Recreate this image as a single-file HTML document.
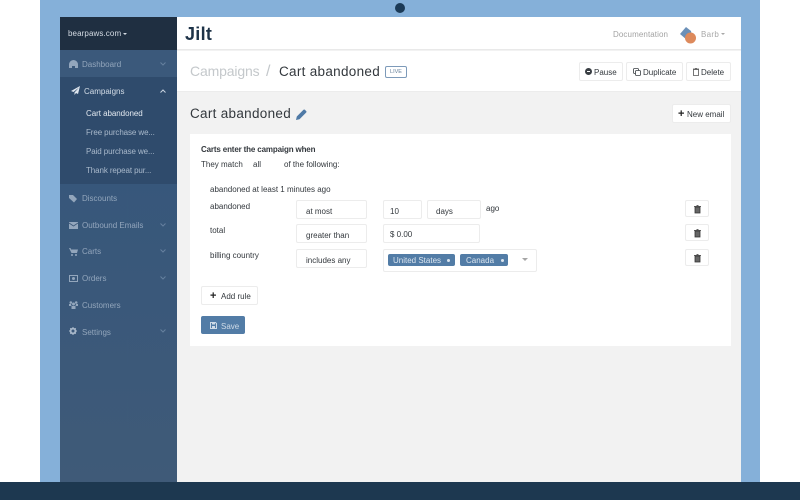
<!DOCTYPE html>
<html><head><meta charset="utf-8"><style>
*{box-sizing:border-box;margin:0;padding:0}
html,body{width:800px;height:500px;overflow:hidden;background:#fff}
body{position:relative;font-family:"Liberation Sans",sans-serif;color:#33383d;filter:blur(.35px)}
.a{position:absolute}
.t{position:absolute;white-space:nowrap;line-height:14px;font-size:8px;letter-spacing:0}
.n{color:#93a6bc;font-size:8px;letter-spacing:0}
.s{color:#a9b9cb;font-size:8px;letter-spacing:-.1px}
.b{position:absolute;background:#fff;border:1px solid #ececec;border-radius:2px}
.btn{position:absolute;background:#fff;border:1px solid #ececec;border-radius:2px;font-size:8px;line-height:17px;white-space:nowrap}
svg{position:absolute;overflow:visible}
</style></head><body>
<div class="a" style="left:40px;top:0;width:720px;height:482px;background:#85b0d9"></div>
<div class="a" style="left:395px;top:3px;width:10px;height:10px;border-radius:50%;background:#1b3a57"></div>
<div class="a" style="left:60px;top:17px;width:681px;height:465px;background:#f2f2f2"></div>

<!-- sidebar -->
<div class="a" style="left:60px;top:17px;width:117px;height:465px;background:linear-gradient(#37577b 35%,#3f5a78)"></div>
<div class="a" style="left:60px;top:17px;width:117px;height:33px;background:#1f2f41"></div>
<div class="a" style="left:60px;top:50px;width:117px;height:27px;background:#3b597b"></div>
<div class="a" style="left:60px;top:77px;width:117px;height:107px;background:#2f4b6c"></div>
<div class="t" style="left:68px;top:27px;color:#d4dbe3;letter-spacing:.1px">bearpaws.com</div>
<div class="a" style="left:123px;top:33px;border:2px solid transparent;border-top:2.5px solid #d4dbe3"></div>

<svg style="left:69px;top:60px" width="9" height="8" viewBox="0 0 9 8"><path d="M4.500 0A4.500 4.500 0 0 0 0 4.500V8h3V6h3v2h3V4.500A4.500 4.500 0 0 0 4.500 0Z" fill="#93a6bc"/></svg>
<div class="t n" style="left:82px;top:58px">Dashboard</div>
<svg style="left:160px;top:62px" width="6" height="4"><path d="M.5 .5 3 3 5.500 .5" fill="none" stroke="#66809e"/></svg>

<svg style="left:71px;top:86px" width="9" height="9" viewBox="0 0 9 9"><path d="M9 0 0 5l2.500 1L8 1.500 3.500 6.500V9L5 7l2 1Z" fill="#dfe6ee"/></svg>
<div class="t" style="left:84px;top:85px;color:#d4dde7">Campaigns</div>
<svg style="left:160px;top:89px" width="6" height="4"><path d="M.5 3.500 3 1 5.500 3.500" fill="none" stroke="#c8d3df"/></svg>
<div class="t" style="left:86px;top:107px;color:#e3e9f0;letter-spacing:-.05px">Cart abandoned</div>
<div class="t s" style="left:86px;top:126px">Free purchase we...</div>
<div class="t s" style="left:86px;top:145px">Paid purchase we...</div>
<div class="t s" style="left:86px;top:164px">Thank repeat pur...</div>

<svg style="left:69px;top:195px" width="9" height="8" viewBox="0 0 9 8"><path d="M0 0h4l4 4-3 3.500L0 3Z" fill="#93a6bc"/></svg>
<div class="t n" style="left:82px;top:192px">Discounts</div>
<svg style="left:69px;top:222px" width="9" height="7" viewBox="0 0 9 7"><path d="M0 0h9v7H0Z" fill="#93a6bc"/><path d="M0 1l4.500 3L9 1" fill="none" stroke="#3c5777" stroke-width=".8"/></svg>
<div class="t n" style="left:82px;top:219px">Outbound Emails</div>
<svg style="left:160px;top:223px" width="6" height="4"><path d="M.5 .5 3 3 5.500 .5" fill="none" stroke="#66809e"/></svg>
<svg style="left:69px;top:248px" width="9" height="8" viewBox="0 0 9 8"><path d="M0 0h1.500l.5 1.500h7L8 5H2.500Z" fill="#93a6bc"/><circle cx="3" cy="7" r="1" fill="#93a6bc"/><circle cx="7" cy="7" r="1" fill="#93a6bc"/></svg>
<div class="t n" style="left:82px;top:245px">Carts</div>
<svg style="left:160px;top:249px" width="6" height="4"><path d="M.5 .5 3 3 5.500 .5" fill="none" stroke="#66809e"/></svg>
<svg style="left:69px;top:275px" width="9" height="7" viewBox="0 0 9 7"><rect x=".5" y=".5" width="8" height="6" fill="none" stroke="#93a6bc"/><circle cx="4.500" cy="3.500" r="1.500" fill="#93a6bc"/></svg>
<div class="t n" style="left:82px;top:272px">Orders</div>
<svg style="left:160px;top:276px" width="6" height="4"><path d="M.5 .5 3 3 5.500 .5" fill="none" stroke="#66809e"/></svg>
<svg style="left:69px;top:301px" width="9" height="8" viewBox="0 0 9 8"><circle cx="1.800" cy="1.500" r="1.300" fill="#93a6bc"/><circle cx="7.200" cy="1.500" r="1.300" fill="#93a6bc"/><circle cx="4.500" cy="3" r="1.500" fill="#93a6bc"/><path d="M0 3h2l.5 2H0ZM7 3h2v2H6.500ZM2.500 5h4v3h-4Z" fill="#93a6bc"/></svg>
<div class="t n" style="left:82px;top:299px">Customers</div>
<svg style="left:69px;top:327px" width="8" height="8" viewBox="0 0 8 8"><circle cx="4" cy="4" r="2.400" fill="none" stroke="#a9b8ca" stroke-width="1.800"/><path d="M4 0v1M4 7v1M0 4h1M7 4h1M1.200 1.200l.7.7M6.100 6.100l.7.7M1.200 6.800l.7-.7M6.100 1.900l.7-.7" stroke="#a9b8ca"/></svg>
<div class="t n" style="left:82px;top:326px">Settings</div>
<svg style="left:160px;top:329px" width="6" height="4"><path d="M.5 .5 3 3 5.500 .5" fill="none" stroke="#66809e"/></svg>

<!-- top bar -->
<div class="a" style="left:177px;top:17px;width:564px;height:33px;background:#fff;border-bottom:1px solid #e9e9e9"></div>
<div class="t" style="left:185px;top:25px;font-size:18px;line-height:18px;font-weight:bold;color:#1e3348;letter-spacing:.3px">Jilt</div>
<div class="t" style="left:613px;top:28px;color:#a3a3a3;letter-spacing:.1px">Documentation</div>
<svg style="left:680px;top:27px" width="16" height="17" viewBox="0 0 16 17"><path d="M0 7 6 0l5 4 1 5-5 4Z" fill="#6b90b8"/><circle cx="10.500" cy="11" r="5.500" fill="#dd8a5c"/></svg>
<div class="t" style="left:701px;top:28px;color:#a8a8a8;letter-spacing:.3px">Barb</div>
<div class="a" style="left:721px;top:33px;border:2px solid transparent;border-top:2.500px solid #a8a8a8"></div>

<!-- title bar -->
<div class="a" style="left:177px;top:51px;width:564px;height:41px;background:#fff;border-bottom:1px solid #ececec"></div>
<div class="t" style="left:190px;top:63px;font-size:14px;line-height:17px;color:#c4c8cb;letter-spacing:-.15px">Campaigns</div>
<div class="t" style="left:266px;top:63px;font-size:16px;line-height:17px;color:#c4c8cb">/</div>
<div class="t" style="left:279px;top:63px;font-size:13.500px;line-height:17px;color:#33383d;letter-spacing:.3px">Cart abandoned</div>
<div class="a" style="left:385px;top:66px;width:22px;height:12px;border:1px solid #7d9ab9;border-radius:2px;font-size:5.500px;line-height:11px;text-align:center;color:#66809b">LIVE</div>

<div class="btn" style="left:579px;top:62px;width:44px;height:19px"></div>
<svg style="left:585px;top:68px" width="7" height="7"><circle cx="3.500" cy="3.500" r="3.500" fill="#3a3f44"/><path d="M2 3.500h3" stroke="#fff"/></svg>
<div class="t" style="left:594px;top:66px">Pause</div>
<div class="btn" style="left:626px;top:62px;width:57px;height:19px"></div>
<svg style="left:633px;top:68px" width="8" height="8"><rect x=".5" y=".5" width="5" height="5" fill="none" stroke="#3a3f44" stroke-width=".8" rx="1"/><rect x="2.500" y="2.500" width="5" height="5" fill="#fff" stroke="#3a3f44" stroke-width=".8" rx="1"/></svg>
<div class="t" style="left:643px;top:66px">Duplicate</div>
<div class="btn" style="left:686px;top:62px;width:45px;height:19px"></div>
<svg style="left:693px;top:68px" width="6" height="8"><path d="M.5 1.500h5v6h-5ZM0 1h6M2 .5h2" fill="none" stroke="#555" stroke-width=".8"/></svg>
<div class="t" style="left:701px;top:66px">Delete</div>

<!-- heading -->
<div class="t" style="left:190px;top:105px;font-size:13.500px;line-height:17px;letter-spacing:.3px">Cart abandoned</div>
<svg style="left:296px;top:109px" width="11" height="11" viewBox="0 0 11 11"><path d="M0 11 .8 7.500 7.500 .8a1 1 0 0 1 1.400 0l1.300 1.300a1 1 0 0 1 0 1.400L3.500 10.200Z" fill="#4f7aa6"/></svg>
<div class="btn" style="left:672px;top:104px;width:59px;height:19px"></div>
<div class="t" style="left:678px;top:107px;font-size:11px;font-weight:bold;color:#222">+</div>
<div class="t" style="left:687px;top:108px">New email</div>

<!-- card -->
<div class="a" style="left:190px;top:134px;width:541px;height:212px;background:#fff"></div>
<div class="t" style="left:201px;top:143px;font-weight:bold;letter-spacing:-.15px">Carts enter the campaign when</div>
<div class="t" style="left:201px;top:158px">They match</div>
<div class="t" style="left:253px;top:158px">all</div>
<div class="t" style="left:284px;top:158px">of the following:</div>
<div class="t" style="left:210px;top:183px">abandoned at least 1 minutes ago</div>
<div class="t" style="left:210px;top:200px">abandoned</div>
<div class="t" style="left:210px;top:224px">total</div>
<div class="t" style="left:210px;top:249px">billing country</div>

<div class="b" style="left:296px;top:200px;width:71px;height:19px"></div><div class="t" style="left:306px;top:205px">at most</div>
<div class="b" style="left:383px;top:200px;width:39px;height:19px"></div><div class="t" style="left:390px;top:205px">10</div>
<div class="b" style="left:427px;top:200px;width:54px;height:19px"></div><div class="t" style="left:436px;top:205px">days</div>
<div class="t" style="left:486px;top:202px">ago</div>
<div class="b" style="left:296px;top:224px;width:71px;height:19px"></div><div class="t" style="left:306px;top:229px">greater than</div>
<div class="b" style="left:383px;top:224px;width:97px;height:19px"></div><div class="t" style="left:390px;top:228px">$ 0.00</div>
<div class="b" style="left:296px;top:249px;width:71px;height:19px"></div><div class="t" style="left:306px;top:254px">includes any</div>
<div class="b" style="left:383px;top:249px;width:154px;height:23px"></div>
<div class="a" style="left:388px;top:254px;width:67px;height:12px;background:#527ca6;border-radius:2px"></div>
<div class="t" style="left:393px;top:254px;color:#dbe5ef">United States</div>
<div class="a" style="left:447px;top:259px;width:3px;height:3px;background:#dbe5ef;border-radius:50%"></div>
<div class="a" style="left:460px;top:254px;width:48px;height:12px;background:#527ca6;border-radius:2px"></div>
<div class="t" style="left:466px;top:254px;color:#dbe5ef">Canada</div>
<div class="a" style="left:501px;top:259px;width:3px;height:3px;background:#dbe5ef;border-radius:50%"></div>
<div class="a" style="left:522px;top:258px;border:3px solid transparent;border-top:3px solid #a5a5a5"></div>

<div class="b" style="left:685px;top:200px;width:24px;height:17px"></div>
<div class="b" style="left:685px;top:224px;width:24px;height:17px"></div>
<div class="b" style="left:685px;top:249px;width:24px;height:17px"></div>
<svg style="left:694px;top:205px" width="7" height="8"><path d="M0 1.500h7M2.500 .5h2M1 2h5v6H1Z" fill="#666" stroke="#333" stroke-width=".8"/></svg>
<svg style="left:694px;top:229px" width="7" height="8"><path d="M0 1.500h7M2.500 .5h2M1 2h5v6H1Z" fill="#666" stroke="#333" stroke-width=".8"/></svg>
<svg style="left:694px;top:254px" width="7" height="8"><path d="M0 1.500h7M2.500 .5h2M1 2h5v6H1Z" fill="#666" stroke="#333" stroke-width=".8"/></svg>

<div class="b" style="left:201px;top:286px;width:57px;height:19px"></div>
<div class="t" style="left:210px;top:289px;font-size:11px;font-weight:bold;color:#222">+</div>
<div class="t" style="left:221px;top:290px">Add rule</div>
<div class="a" style="left:201px;top:316px;width:44px;height:18px;background:#527ca6;border-radius:2px"></div>
<svg style="left:210px;top:322px" width="7" height="7"><path d="M.5 .5h5l1 1v5h-6Z" fill="none" stroke="#cfdbe7"/><path d="M2 .5h3v2H2ZM2 4h3v2.500H2Z" fill="#cfdbe7"/></svg>
<div class="t" style="left:221px;top:320px;color:#cfdbe7">Save</div>

<div class="a" style="left:0;top:482px;width:800px;height:18px;background:#1d3850"></div>
</body></html>
